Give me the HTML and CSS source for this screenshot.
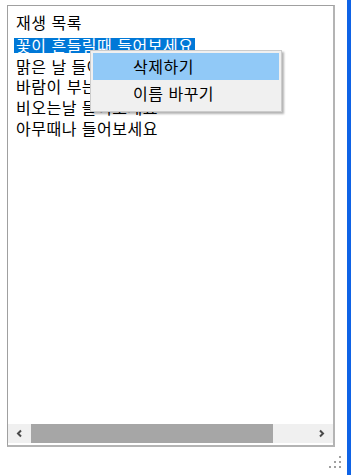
FILE: index.html
```html
<!DOCTYPE html>
<html lang="ko">
<head>
<meta charset="utf-8">
<link rel="stylesheet" href="styles.css">
</head>
<body>
<div class="window">
  <div class="main">
    <div class="listbox">
      <div class="content">
        <div class="title">재생 목록</div>
        <div class="item"><span class="label selected">꽃이 흔들릴때 들어보세요</span></div>
        <div class="item"><span class="label">맑은 날 들어보세요</span></div>
        <div class="item"><span class="label">바람이 부는날 들어보세요</span></div>
        <div class="item"><span class="label">비오는날 들어보세요</span></div>
        <div class="item"><span class="label">아무때나 들어보세요</span></div>
      </div>
      <div class="hscroll">
        <div class="arrow">
          <svg width="9" height="9" viewBox="0 0 9 9"><path d="M6 1.5 L3 4.5 L6 7.5" fill="none" stroke="#4a4a4a" stroke-width="2"/></svg>
        </div>
        <div class="track"><div class="thumb"></div></div>
        <div class="arrow">
          <svg width="9" height="9" viewBox="0 0 9 9"><path d="M3 1.5 L6 4.5 L3 7.5" fill="none" stroke="#4a4a4a" stroke-width="2"/></svg>
        </div>
      </div>
    </div>
    <div class="grip">
      <svg width="14" height="14" viewBox="0 0 14 14">
        <rect x="10" y="0" width="2" height="2" fill="#a0a0a0"/>
        <rect x="5" y="5" width="2" height="2" fill="#a0a0a0"/>
        <rect x="10" y="5" width="2" height="2" fill="#a0a0a0"/>
        <rect x="0" y="10" width="2" height="2" fill="#a0a0a0"/>
        <rect x="5" y="10" width="2" height="2" fill="#a0a0a0"/>
        <rect x="10" y="10" width="2" height="2" fill="#a0a0a0"/>
      </svg>
    </div>
    <div class="menu">
      <div class="menu-item active">삭제하기</div>
      <div class="menu-item">이름 바꾸기</div>
    </div>
  </div>
  <div class="edge"></div>
</div>
</body>
</html>
```
FILE: styles.css
```css
html, body {
  margin: 0;
  padding: 0;
  background: #ffffff;
}
body {
  font-family: "Noto Sans CJK KR", "Noto Sans", sans-serif;
  font-size: 16px;
  letter-spacing: 0.5px;
  color: #000;
}
.window {
  display: flex;
  width: 351px;
  height: 475px;
}
.main {
  position: relative;
  flex: 1;
  padding: 5px 0 0 7px;
  box-sizing: border-box;
}
.edge {
  width: 4px;
  background: #0f63e6;
}
.listbox {
  width: 328px;
  height: 442px;
  box-sizing: border-box;
  border: 1px solid #a0a0a0;
  border-right: 2px solid #b4b4b4;
  border-bottom: 2px solid #b4b4b4;
  background: #fff;
  display: flex;
  flex-direction: column;
}
.content {
  flex: 1;
  padding: 6px 0 0 6px;
}
.title {
  height: 21px;
  line-height: 21px;
  margin-bottom: 2px;
  padding-left: 2px;
}
.item {
  height: 20.75px;
  display: flex;
  align-items: center;
}
.label {
  display: inline-block;
  line-height: 15px;
  height: 15px;
  padding: 0 2px;
}
.label.selected {
  background: #0078d7;
  color: #fff;
}
.hscroll {
  height: 19px;
  margin: 0 0 2px 0;
  display: flex;
  background: #f0f0f0;
}
.arrow {
  width: 23px;
  display: flex;
  align-items: center;
  justify-content: center;
}
.track {
  flex: 1;
  display: flex;
}
.thumb {
  width: 242px;
  background: #a6a6a6;
}
.grip {
  display: flex;
  justify-content: flex-end;
  padding: 9px 0 0 0;
  width: 336px;
  box-sizing: border-box;
}
.grip svg {
  display: block;
}
.menu {
  position: absolute;
  left: 90px;
  top: 50px;
  width: 192px;
  height: 62px;
  box-sizing: border-box;
  background: #f0f0f0;
  border: 1px solid #cccccc;
  padding: 2px;
  box-shadow: 2px 2px 2px rgba(0,0,0,0.3);
}
.menu-item {
  height: 27px;
  line-height: 27px;
  padding-left: 40px;
}
.menu-item.active {
  background: #91c9f7;
}
```
